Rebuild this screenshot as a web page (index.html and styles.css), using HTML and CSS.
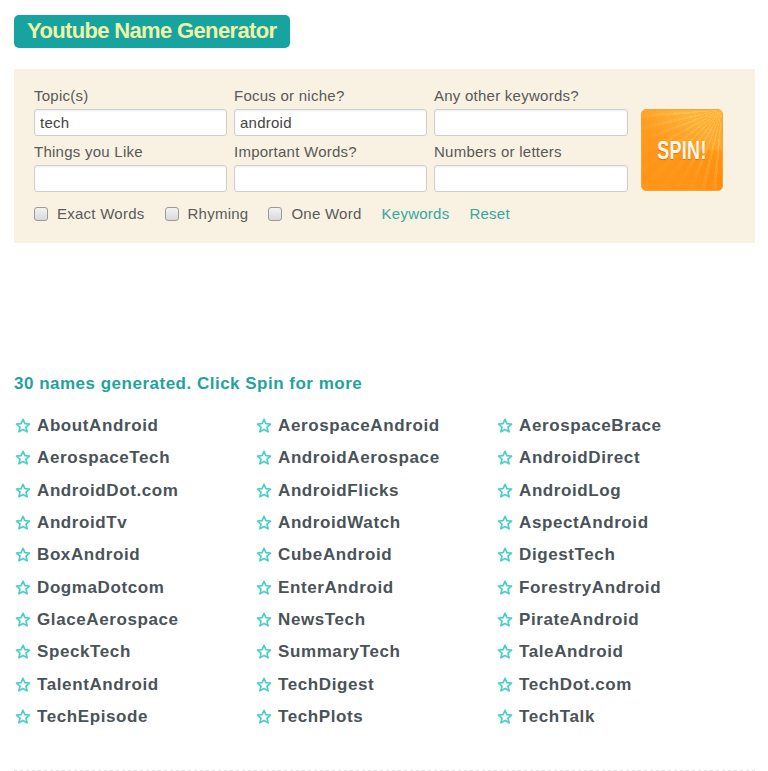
FILE: index.html
```html
<!DOCTYPE html>
<html>
<head>
<meta charset="utf-8">
<link rel="stylesheet" href="styles.css">
</head>
<body>
<div class="page">
  <h1 class="title">Youtube Name Generator</h1>
  <form class="panel">
    <div class="fields">
      <label class="field"><span class="lbl">Topic(s)</span><input type="text" value="tech"></label>
      <label class="field"><span class="lbl">Focus or niche?</span><input type="text" value="android"></label>
      <label class="field"><span class="lbl">Any other keywords?</span><input type="text"></label>
      <label class="field"><span class="lbl">Things you Like</span><input type="text"></label>
      <label class="field"><span class="lbl">Important Words?</span><input type="text"></label>
      <label class="field"><span class="lbl">Numbers or letters</span><input type="text"></label>
      <button type="button" class="spin"><span>SPIN!</span></button>
    </div>
    <div class="options">
      <label class="opt"><input type="checkbox"> Exact Words</label>
      <label class="opt"><input type="checkbox"> Rhyming</label>
      <label class="opt"><input type="checkbox"> One Word</label>
      <a class="link">Keywords</a>
      <a class="link">Reset</a>
    </div>
  </form>
  <div class="adspace"></div>
  <h2 class="count">30 names generated. Click Spin for more</h2>
  <ul class="names">
    <li>AboutAndroid</li><li>AerospaceAndroid</li><li>AerospaceBrace</li>
    <li>AerospaceTech</li><li>AndroidAerospace</li><li>AndroidDirect</li>
    <li>AndroidDot.com</li><li>AndroidFlicks</li><li>AndroidLog</li>
    <li>AndroidTv</li><li>AndroidWatch</li><li>AspectAndroid</li>
    <li>BoxAndroid</li><li>CubeAndroid</li><li>DigestTech</li>
    <li>DogmaDotcom</li><li>EnterAndroid</li><li>ForestryAndroid</li>
    <li>GlaceAerospace</li><li>NewsTech</li><li>PirateAndroid</li>
    <li>SpeckTech</li><li>SummaryTech</li><li>TaleAndroid</li>
    <li>TalentAndroid</li><li>TechDigest</li><li>TechDot.com</li>
    <li>TechEpisode</li><li>TechPlots</li><li>TechTalk</li>
  </ul>
  <div class="divider"></div>
</div>
</body>
</html>
```
FILE: styles.css
```css
* { box-sizing: border-box; }
html, body { margin: 0; padding: 0; background: #fff; }
body { font-family: "Liberation Sans", Arial, sans-serif; color: #555; }
.page { padding: 15px 13px 0 14px; }

.title {
  display: inline-block;
  margin: 0;
  height: 33px;
  padding: 0 0 0 13px;
  background: #17a39f;
  border-radius: 5px;
  color: #eef4a6;
  font-size: 22px;
  line-height: 31px;
  font-weight: bold;
  letter-spacing: -0.65px;
  width: 276px;
  white-space: nowrap;
}

.panel {
  margin-top: 21px;
  background: #f9f2e3;
  padding: 18px 20px 20px 20px;
  width: 741px;
}
.fields {
  display: grid;
  grid-template-columns: 193px 193px 194px 82px;
  column-gap: 7px;
  row-gap: 7px;
}
.field { display: flex; flex-direction: column; }
.lbl { font-size: 15px; line-height: 18px; margin-bottom: 4px; color: #585858; letter-spacing: 0.25px; }
.field input {
  height: 27px;
  border: 1px solid #cfcfcf;
  border-radius: 3px;
  background: #fff;
  box-shadow: inset 0 1px 2px rgba(0,0,0,0.08);
  font-family: "Liberation Sans", Arial, sans-serif;
  font-size: 15px;
  letter-spacing: 0.25px;
  color: #444;
  padding: 0 5px;
  margin: 0;
}
.spin {
  grid-column: 4;
  grid-row: 1 / span 2;
  margin: 22px 0 0 6px;
  width: 82px;
  height: 82px;
  border: 1px solid #f7a437;
  border-radius: 5px;
  padding: 0;
  background:
    repeating-conic-gradient(from 200deg at 100% 0%, rgba(255,236,170,0.22) 0deg 3deg, rgba(255,255,255,0) 3deg 8deg),
    linear-gradient(180deg, #ffb43a 0%, #ffa62a 48%, #ff9613 52%, #ff7d02 100%);
  display: flex;
  align-items: center;
  justify-content: center;
  cursor: pointer;
  position: relative;
  overflow: hidden;
}
.spin::after {
  content: "";
  position: absolute;
  inset: 0;
  background: linear-gradient(225deg, rgba(255,150,30,0) 25%, rgba(255,150,25,0.9) 65%);
}
.spin span {
  position: relative;
  z-index: 1;
  display: inline-block;
  font-family: "Liberation Sans", Arial, sans-serif;
  font-weight: bold;
  font-size: 26px;
  color: #fff9ec;
  transform: scaleX(0.69);
  text-shadow: 0 1px 1px rgba(160,70,0,0.45);
  letter-spacing: 0.5px;
}

.options {
  display: flex;
  align-items: center;
  margin-top: 13px;
  font-size: 15px;
  line-height: 18px;
  letter-spacing: 0.25px;
  gap: 20px;
}
.opt { display: flex; align-items: center; gap: 9px; color: #5a5a5a; }
.opt input {
  appearance: none;
  -webkit-appearance: none;
  margin: 0;
  width: 14px;
  height: 14px;
  border: 1px solid #9a9a9a;
  border-radius: 3px;
  background: linear-gradient(#f2f2f2, #d9d9d9);
}
.link { color: #35a8a2; text-decoration: none; }

.adspace { height: 131px; }

.count {
  margin: 0;
  font-size: 17px;
  line-height: 19px;
  font-weight: bold;
  letter-spacing: 0.5px;
  color: #1fa39d;
}

.names {
  list-style: none;
  margin: 17px 0 0 0;
  padding: 0;
  display: grid;
  grid-template-columns: repeat(3, 241px);
}
.names li {
  font-size: 17px;
  line-height: 32.33px;
  font-weight: bold;
  letter-spacing: 0.6px;
  color: #4a5358;
  padding-left: 23px;
  position: relative;
}
.names li::before {
  content: "";
  position: absolute;
  left: 1px;
  top: 8px;
  width: 16px;
  height: 16px;
  background: url("data:image/svg+xml,%3Csvg xmlns='http://www.w3.org/2000/svg' viewBox='0 0 16 16'%3E%3Cpath d='M8 1.4l1.9 4.3 4.6.4-3.5 3.1 1.1 4.6L8 11.4l-4.1 2.4 1.1-4.6-3.5-3.1 4.6-.4z' fill='none' stroke='%234ecdcd' stroke-width='1.7' stroke-linejoin='round'/%3E%3C/svg%3E") no-repeat center / 16px 16px;
}

.divider {
  margin-top: 37px;
  border-top: 3px dotted #e2e2e2;
  width: 741px;
}
```
